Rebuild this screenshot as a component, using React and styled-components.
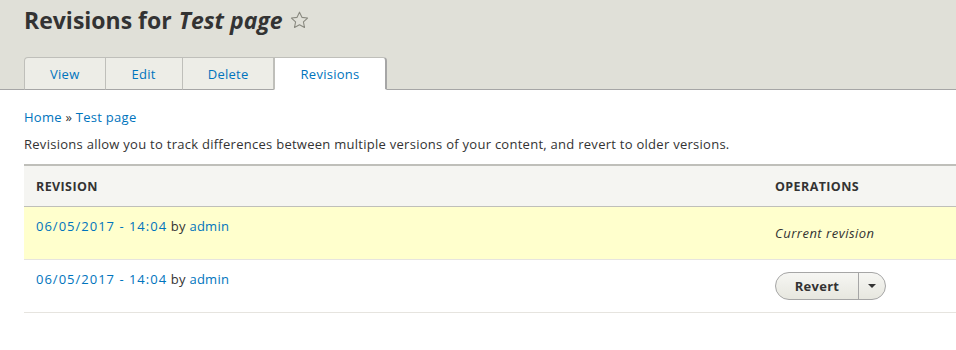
import React from "react";
import styled, { createGlobalStyle } from "styled-components";

const GlobalStyle = createGlobalStyle`
  body {
    margin: 0;
    background: #fff;
    font-family: "Open Sans", "Liberation Sans", sans-serif;
    font-size: 13px;
    letter-spacing: 0.27px;
    color: #333;
  }
`;

const revisions = [
  { date: "06/05/2017 - 14:04", author: "admin", current: true },
  { date: "06/05/2017 - 14:04", author: "admin", current: false },
];

const tabs = [
  { label: "View", pad: "0 25px" },
  { label: "Edit", pad: "0 26px" },
  { label: "Delete", pad: "0 24px 0 25px" },
  { label: "Revisions", pad: "0 25px 0 26px", active: true },
];

const StarIcon = () => (
  <svg width="19" height="18" viewBox="0 0 24 23">
    <path
      d="M12 1.5l3.1 6.6 7.2.9-5.3 5 1.4 7.1L12 17.6l-6.4 3.5L7 14 1.7 9l7.2-.9z"
      fill="none"
      stroke="#8a8a80"
      strokeWidth="1.4"
      strokeLinejoin="round"
    />
  </svg>
);

const App = () => {
  return (
    <>
      <GlobalStyle />
      <Header>
        <Title>
          Revisions for <em>Test page</em>
          <Star>
            <StarIcon />
          </Star>
        </Title>
        <Tabs>
          {tabs.map((t) => (
            <Tab key={t.label} href="#" active={t.active} pad={t.pad}>
              {t.label}
            </Tab>
          ))}
        </Tabs>
      </Header>
      <Content>
        <Breadcrumb>
          <Link href="#">Home</Link> » <Link href="#">Test page</Link>
        </Breadcrumb>
        <Description>
          Revisions allow you to track differences between multiple versions of
          your content, and revert to older versions.
        </Description>
        <Table>
          <thead>
            <tr>
              <Th>Revision</Th>
              <Th narrow>Operations</Th>
            </tr>
          </thead>
          <tbody>
            {revisions.map((rev, i) => (
              <Row key={i} current={rev.current}>
                <Td>
                  <DateLink href="#">{rev.date}</DateLink> by{" "}
                  <Link href="#">{rev.author}</Link>
                </Td>
                <OpTd>
                  {rev.current ? (
                    <CurrentLabel>Current revision</CurrentLabel>
                  ) : (
                    <SplitButton>
                      <MainButton>Revert</MainButton>
                      <ToggleButton>
                        <Caret />
                      </ToggleButton>
                    </SplitButton>
                  )}
                </OpTd>
              </Row>
            ))}
          </tbody>
        </Table>
      </Content>
    </>
  );
};

const Header = styled.div`
  background: #e0e0d8;
  padding: 0 0 0 24px;
  border-bottom: 1px solid #a6a6a6;
`;
const Title = styled.h1`
  margin: 0;
  padding-top: 3px;
  height: 54px;
  font-size: 23px;
  letter-spacing: 0px;
  font-weight: bold;
  line-height: 34px;
  color: #333;
  display: flex;
  align-items: flex-start;
  em {
    margin-left: 7px;
    font-style: italic;
  }
`;
const Star = styled.span`
  margin-left: 7px;
  margin-top: 8px;
  display: inline-flex;
`;
const Tabs = styled.div`
  display: flex;
  margin-bottom: -1px;
`;
const Tab = styled.a`
  display: block;
  height: 33px;
  box-sizing: border-box;
  padding: ${(p) => p.pad};
  line-height: 32px;
  font-size: 13px;
  color: #0074bd;
  text-decoration: none;
  background: ${(p) => (p.active ? "#fff" : "#ededE7")};
  border: 1px solid #bfbfba;
  border-bottom: ${(p) => (p.active ? "1px solid #fff" : "1px solid #a6a6a6")};
  border-left: ${(p) => (p.active ? "1px solid #bfbfba" : "none")};
  border-right: ${(p) => (p.active ? "2px solid #a6a6a6" : "1px solid #bfbfba")};
  border-radius: ${(p) => (p.active ? "0 4px 0 0" : "0")};
  &:first-child {
    border-left: 1px solid #bfbfba;
    border-radius: 4px 0 0 0;
  }
`;
const Content = styled.div`
  padding: 18px 0 0 24px;
`;
const Link = styled.a`
  color: #0074bd;
  text-decoration: none;
`;
const DateLink = styled(Link)`
  letter-spacing: 1px;
`;
const Breadcrumb = styled.div`
  line-height: 18px;
  margin-bottom: 9px;
`;
const Description = styled.p`
  margin: 0 0 11px;
  line-height: 18px;
`;
const Table = styled.table`
  width: 100%;
  border-collapse: collapse;
  border-top: 2px solid #bfbfba;
`;
const Th = styled.th`
  background: #f5f5f2;
  text-align: left;
  text-transform: uppercase;
  font-size: 12.5px;
  font-weight: bold;
  letter-spacing: 0.4px;
  color: #333;
  height: 40px;
  padding: 0 12px;
  border-bottom: 1px solid #bfbfba;
  width: ${(p) => (p.narrow ? "169px" : "auto")};
`;
const Row = styled.tr`
  background: ${(p) => (p.current ? "#ffffcd" : "#fff")};
  border-bottom: 1px solid #e6e4df;
`;
const Td = styled.td`
  height: 53px;
  box-sizing: border-box;
  padding: 9px 12px;
  vertical-align: top;
  line-height: 20px;
`;
const OpTd = styled.td`
  padding: 0 12px;
  vertical-align: middle;
`;
const CurrentLabel = styled.em`
  font-style: italic;
  letter-spacing: 0.5px;
`;
const SplitButton = styled.div`
  display: inline-flex;
  height: 28px;
  box-sizing: border-box;
  border: 1px solid #a6a6a6;
  border-radius: 14px;
  overflow: hidden;
  background: linear-gradient(#f6f6f3, #e7e7df);
`;
const MainButton = styled.span`
  display: flex;
  align-items: center;
  width: 82px;
  justify-content: center;
  font-weight: bold;
  font-size: 13px;
  color: #333;
  border-right: 1px solid #a6a6a6;
`;
const ToggleButton = styled.span`
  display: flex;
  align-items: center;
  justify-content: center;
  width: 26px;
`;
const Caret = styled.span`
  width: 0;
  height: 0;
  border-left: 4px solid transparent;
  border-right: 4px solid transparent;
  border-top: 4px solid #333;
`;

export default App;
